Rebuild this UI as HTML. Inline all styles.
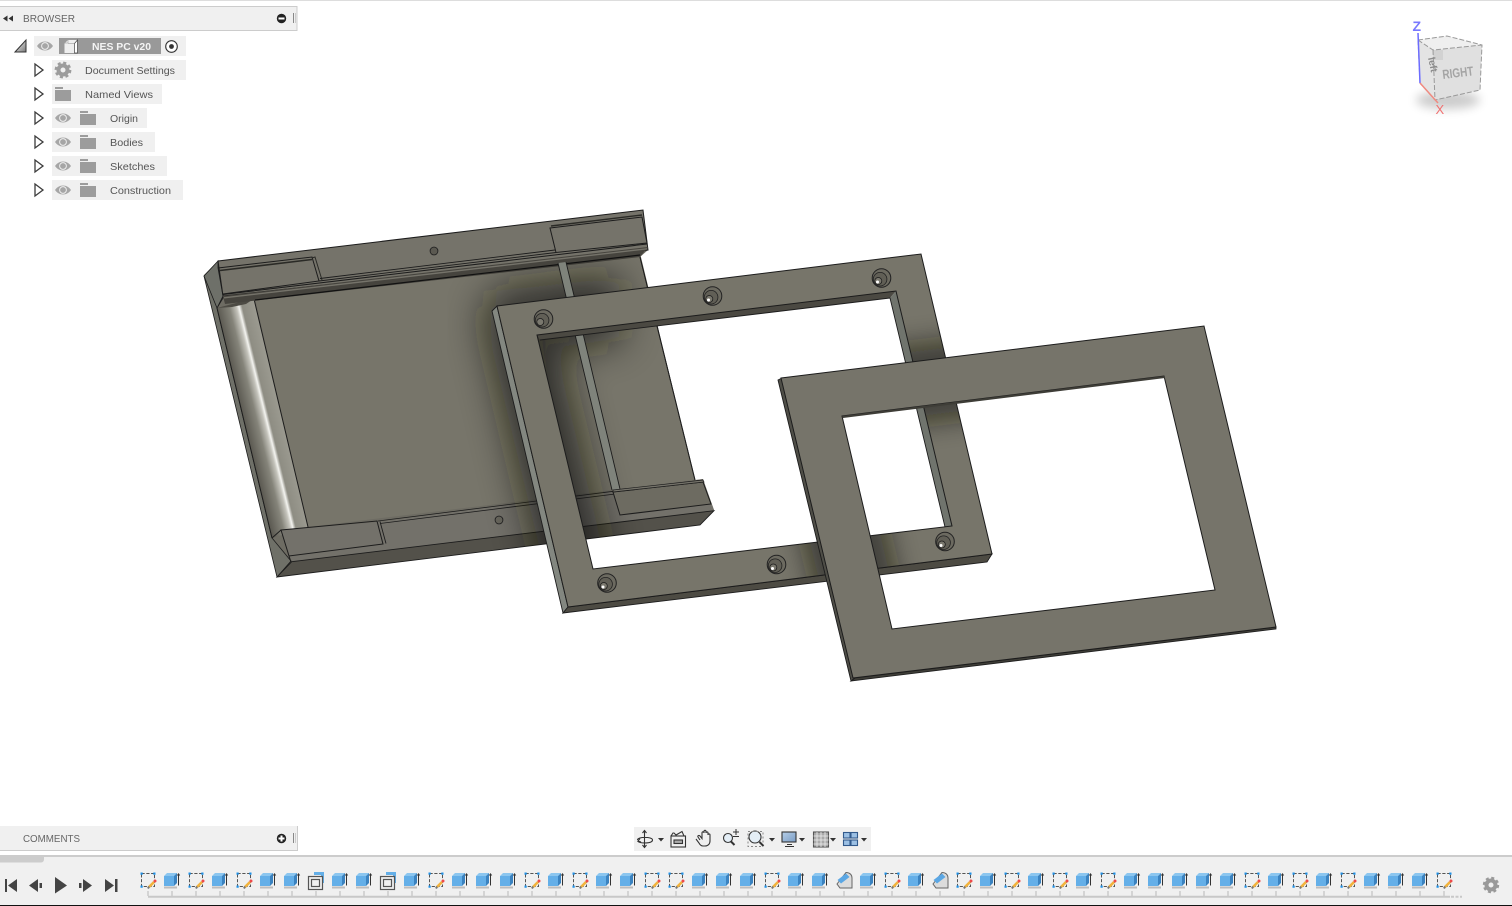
<!DOCTYPE html>
<html><head><meta charset="utf-8"><title>NES PC v20</title>
<style>
html,body{margin:0;padding:0;background:#fff;width:1512px;height:906px;overflow:hidden}
svg{display:block;position:absolute;left:0;top:0}
text{font-family:"Liberation Sans",sans-serif}
.t{font-size:10.5px;fill:#555}
.h{font-size:10.5px;fill:#666}
</style></head><body>
<svg width="1512" height="906" viewBox="0 0 1512 906" xmlns="http://www.w3.org/2000/svg">
<defs>
<filter id="b22" x="-40%" y="-40%" width="180%" height="180%"><feGaussianBlur stdDeviation="20"/></filter>
<filter id="b16" x="-30%" y="-30%" width="160%" height="160%"><feGaussianBlur stdDeviation="15"/></filter>
<filter id="b3" x="-30%" y="-80%" width="160%" height="260%"><feGaussianBlur stdDeviation="5"/></filter>
<linearGradient id="fil" gradientUnits="userSpaceOnUse" x1="217" y1="308" x2="254" y2="299">
<stop offset="0" stop-color="#5c5a52"/><stop offset=".32" stop-color="#85847a"/><stop offset=".5" stop-color="#c4c3bb"/><stop offset=".57" stop-color="#f4f4f0"/><stop offset=".65" stop-color="#8e8d83"/><stop offset="1" stop-color="#9c9b91"/>
</linearGradient>
<linearGradient id="root" x1="0" y1="0" x2="1" y2="1"><stop offset="0" stop-color="#fff"/><stop offset="1" stop-color="#777"/></linearGradient>
<linearGradient id="mon" x1="0" y1="0" x2="1" y2="1"><stop offset="0" stop-color="#b6cfe8"/><stop offset="1" stop-color="#7a9cc4"/></linearGradient>
<clipPath id="trayclip"><polygon points="255,300 640,255 695,480 703,479 714,510 700,525 277,577 272,538 308,527"/></clipPath>
<clipPath id="f2clip"><path clip-rule="evenodd" d="M497,306 921,254 992,554 568,607Z M537,335 896,291 952,526 593,569Z"/></clipPath>

<g id="eye"><path d="M-8,0C-4,-6 4,-6 8,0C4,6 -4,6 -8,0Z" fill="#a6a6a6"/><circle r="3.4" fill="none" stroke="#eee" stroke-width="1"/><circle r="2" fill="#a6a6a6"/></g>
<path id="fold" d="M0,0h8v2h-8zM0,3h16v11h-16z" fill="#9c9c9c"/>
<path id="arr" d="M0,0L8,6L0,12Z" fill="#fff" stroke="#3c3c3c" stroke-width="1.3"/>
<g id="scr"><circle r="9.3" fill="#6c6a60" stroke="#222" stroke-width="1"/><circle cx="-1.4" cy="1.200" r="6.800" fill="#615f56" stroke="#222" stroke-width=".8"/><circle cx="-3.200" cy="3" r="3.500" fill="#7a786e" stroke="#1c1c1c" stroke-width=".8"/></g>
<circle id="wd" r="1.5" fill="#fff"/>

<g id="S"><rect x="-6.5" y="873.5" width="13" height="13" fill="none" stroke="#555" stroke-width="1" stroke-dasharray="3.2 1.6"/><path fill="#1e90e6" d="M-7.500,872.500h2.200v2.200h-2.200zM5.300,872.500h2.200v2.200h-2.200zM-7.500,885.500h2.200v2.200h-2.200z"/><path d="M1,887L6,882" stroke="#f2b33d" stroke-width="2.600"/><path d="M0,888.5L1,886.500" stroke="#777" stroke-width="2"/><circle cx="7" cy="881" r="1.500" fill="#ee4a4a"/></g>
<g id="E"><path d="M-8,876h10v10h-10z" fill="#64afe8"/><path d="M-8,876l3,-3h10l-3,3z" fill="#8cc6ef"/><path d="M2,876l3,-3v10l-3,3z" fill="#3b83c0"/><path d="M-8,886.500h13v2h-13z" fill="#bdbdbd"/><path d="M6.500,885.500v-11" stroke="#333" stroke-width="1"/><path d="M4.800,875.500l1.700,-2.500l1.700,2.500z" fill="#333"/></g>
<g id="C"><path d="M-2,872h10v11h-3v-8h-7z" fill="#64afe8"/><rect x="-7.500" y="876.500" width="14" height="13" fill="#f0f0f0" stroke="#555" stroke-width="1.200"/><rect x="-4.500" y="879.500" width="8" height="7" fill="#f0f0f0" stroke="#555" stroke-width="1.200"/></g>
<g id="F"><path d="M-7,884L2,872.500C6,872.500 8,875 8,878V888H-4Z" fill="#dcdcdc" stroke="#666" stroke-width="1"/><path d="M-6.500,880L2,873.500L5.500,877L-3,883.500Z" fill="#5ba7e4"/></g>
<path id="car" d="M0,0h6l-3,3.500z" fill="#333"/>
</defs>

<rect width="1512" height="906" fill="#fff"/>
<rect width="1512" height="1" fill="#ddd"/>

<!-- TRAY -->
<polygon points="204,275 218,261 643,210 648,250 640,257 695,480 703,479 714,510 700,525 277,577" fill="#6e6c63"/>
<polygon points="255,298 640,253 695,480 308,527" fill="#77756a"/>
<polygon points="204,276 218,267 223,298 217,308 272,538 291,561 277,577" fill="#6f7068" stroke="#1c1c1c" stroke-width=".8"/>
<polygon points="204,276 218,261 218,268 223,296 217,308" fill="#6e7069" stroke="#1c1c1c" stroke-width=".8"/>
<polygon points="217,308 254,299 308,527 272,538" fill="url(#fil)"/>
<polygon points="217,308 255,298 246,304 232,307" fill="#4d4b44"/>
<path d="M217,308 272,538M254,299 308,527" stroke="#1c1c1c" stroke-width="1" fill="none"/>
<polygon points="218,261 643,210 648,250 223,296" fill="#75736a" stroke="#1c1c1c" stroke-width="1"/>
<polygon points="223,296 648,247 640,257 225,304" fill="#46443e"/>
<path d="M224,297.800L647,248.800" stroke="#75736a" stroke-width="1.400"/>
<path d="M223,294.500L647,244" stroke="#1c1c1c" stroke-width="1"/>
<path d="M255,300L640,255" stroke="#111" stroke-width="1.200"/>
<path d="M218,268 312,257 319,281 223,294" fill="none" stroke="#1c1c1c" stroke-width="1"/>
<path d="M220,270.500 312,259.500" stroke="#2a2a26" stroke-width="1.500"/>
<path d="M312,258 315,257 322,280" stroke="#2a2a26" stroke-width="1" fill="none"/>
<path d="M319,281 556,252.500M320,278.500 555,250" stroke="#1c1c1c" stroke-width=".9"/>
<path d="M550,228 642,217 647,243 556,252.500 550,228Z" fill="none" stroke="#1c1c1c" stroke-width="1"/>
<path d="M551,226 642,215" stroke="#2a2a26" stroke-width="1.400"/>
<circle cx="434" cy="251" r="3.900" fill="#5b5951" stroke="#222" stroke-width=".9"/>
<path d="M640,257 695,480" stroke="#1c1c1c" stroke-width="1"/>
<polygon points="281,530 378,522 537,501 703,480 714,510 292,562" fill="#73716a"/>
<polygon points="291.700,561.700 714,510.700 700,525 277,577" fill="#53514a" stroke="#1c1c1c" stroke-width=".9"/>
<path d="M281,530 377,521 383,544 289,556 281,530Z" fill="none" stroke="#1c1c1c" stroke-width="1"/>
<path d="M272,538 281,530M289,556 291,562M380,521.500 386,543.500" stroke="#1c1c1c" stroke-width=".9" fill="none"/>
<path d="M378,521 703,480M380,523.500 703,483" stroke="#1c1c1c" stroke-width=".8"/>
<circle cx="499" cy="520" r="3.900" fill="#67655c" stroke="#222" stroke-width=".9"/>

<!-- shadow of frame 2 on tray -->
<g clip-path="url(#trayclip)"><path d="M497,306 620,291 M497,306 568,607 M537,335 593,569 M537,335 620,325" fill="none" stroke="#14130f" stroke-width="30" opacity=".78" filter="url(#b22)"/></g>
<path d="M640,257 695,480" stroke="#1c1c1c" stroke-width="1" opacity=".7"/>
<!-- stripe -->
<polygon points="558,263 566,262 620,489 612,490" fill="#7f837b"/>
<path d="M566,262 620,489M558,263 612,490" stroke="#1c1c1c" stroke-width=".9"/>
<!-- right end slot -->
<polygon points="613,492 703,482 711,504 620,515" fill="#6d6b61" stroke="#1c1c1c" stroke-width="1"/>
<polygon points="613,490 703,480 704,482 613,492" fill="#75736a" stroke="#1c1c1c" stroke-width=".7"/>

<!-- FRAME 2 -->
<polygon points="492,311 497,306 568,607 563,613" fill="#838780" stroke="#1c1c1c" stroke-width=".9"/>
<polygon points="568,607 992,554 987,562 563,613" fill="#4d4b43" stroke="#1c1c1c" stroke-width=".9"/>
<path fill-rule="evenodd" d="M497,306 921,254 992,554 568,607Z M537,335 896,291 952,526 593,569Z" fill="#77756a"/>
<polygon points="537,335 896,291 890,298 540,340" fill="#4b4942"/>
<polygon points="896,291 952,526 945,527 890,298" fill="#70746d"/>
<g clip-path="url(#f2clip)"><path d="M781,378 1204,326 M781,378 853,678 M842,416 1164,376 M842,416 892,629 M853,678 1000,660" fill="none" stroke="#14130f" stroke-width="24" opacity=".82" filter="url(#b16)"/></g>
<path d="M497,306 921,254 992,554 568,607Z M537,335 896,291 952,526 593,569 537,335Z" fill="none" stroke="#1c1c1c" stroke-width="1"/>
<path d="M540,340 890,298 945,527" fill="none" stroke="#1c1c1c" stroke-width=".9"/>
<use href="#scr" x="543.500" y="319"/>
<use href="#scr" x="712.500" y="296"/><use href="#wd" x="708.500" y="300"/>
<use href="#scr" x="881.500" y="278"/><use href="#wd" x="877.500" y="282"/>
<use href="#scr" x="607" y="583"/><use href="#wd" x="603" y="587"/>
<use href="#scr" x="776.500" y="564.500"/><use href="#wd" x="772.500" y="568.500"/>
<use href="#scr" x="945" y="541.500"/><use href="#wd" x="941" y="545.500"/>

<!-- FRAME 3 -->
<polygon points="778,380 782,378 855,678 851,681" fill="#4f4e47" stroke="#1c1c1c" stroke-width=".9"/>
<polygon points="855,678 1276,627 1276,629 851,681" fill="#3e3d37" stroke="#1c1c1c" stroke-width=".8"/>
<path fill-rule="evenodd" d="M781,378 1204,326 1276,627 853,678Z M842,416 1164,376 1215,590 892,629Z" fill="#76746a"/>
<path d="M781,378 1204,326 1276,627 853,678Z M842,416 1164,376 1215,590 892,629 842,416Z" fill="none" stroke="#1c1c1c" stroke-width="1"/>
<polygon points="842,416 1164,376 1165,378 843,418" fill="#3e3d37"/>

<!-- VIEW CUBE -->
<ellipse cx="1448" cy="100" rx="32" ry="9" fill="#000" opacity=".2" filter="url(#b3)"/>
<polygon points="1418,40 1433,50 1435,100 1420,83" fill="#e4e4e4"/>
<polygon points="1433,50 1482,45 1480,90 1435,100" fill="#e0e0e0"/>
<polygon points="1418,40 1447,36 1482,45 1433,50" fill="#efefef"/>
<rect x="1433" y="50" width="10" height="10" fill="#d2d2d2"/>
<path d="M1418,40 1447,36 1482,45 1480,90 1435,100 1420,83ZM1418,40 1433,50 1482,45M1433,50 1435,100" fill="none" stroke="#999" stroke-width="1" stroke-dasharray="5 2"/>
<text transform="translate(1443,79) rotate(-7)" style="font-size:13px;font-weight:bold;fill:#a4a4a4" textLength="31" lengthAdjust="spacingAndGlyphs">RIGHT</text>
<text transform="translate(1428,58) rotate(78)" style="font-size:10px;font-weight:bold;fill:#8c8c8c">left</text>
<path d="M1418,33 1420,83" stroke="#6c6cff" stroke-width="1.500"/>
<path d="M1420,83 1438,103" stroke="#f08a80" stroke-width="1.500"/>
<text x="1412.500" y="31" style="font-size:14px;font-weight:bold;fill:#7878ff">Z</text>
<text x="1435.500" y="114" style="font-size:13px;fill:#f07070">X</text>

<!-- BROWSER -->
<rect x="-1" y="6.500" width="298" height="24" fill="#f0f0f0" stroke="#ccc"/>
<path d="M3,18.500l4.500,-3v6zM8.500,18.500l4.500,-3v6z" fill="#333"/>
<text x="23" y="22" class="h" textLength="52" lengthAdjust="spacingAndGlyphs">BROWSER</text>
<circle cx="281.500" cy="18.500" r="4.700" fill="#222"/><rect x="278.500" y="17.500" width="6" height="2" fill="#fff"/>
<rect x="293" y="13" width="1" height="10" fill="#888"/><rect x="295" y="13" width="1" height="10" fill="#ccc"/>

<path d="M15,52L26,40V52Z" fill="url(#root)" stroke="#333" stroke-width="1"/>
<rect x="34" y="36" width="152" height="20" fill="#f0f0f0"/>
<use href="#eye" x="45" y="46"/>
<rect x="59" y="38" width="102" height="16" fill="#999"/>
<path d="M64.500,43.500l3.500,-3.500h9.500v13h-13z" fill="#eee"/><path d="M68,40v3h-3.500M68,43.500h6" stroke="#aaa" stroke-width=".7" fill="none"/><path d="M74.500,43.500l3,-3.500v13h-3z" fill="#fff" stroke="#444" stroke-width=".7"/>
<text x="92" y="50" style="font-size:10.500px;font-weight:bold;fill:#f4f4f4" textLength="59" lengthAdjust="spacingAndGlyphs">NES PC v20</text>
<circle cx="171.500" cy="46.500" r="5.800" fill="#fff" stroke="#333" stroke-width="1.100"/><circle cx="171.500" cy="46.500" r="2.400" fill="#333"/>

<rect x="52" y="60" width="134" height="20" fill="#f0f0f0"/>
<rect x="52" y="84" width="110" height="20" fill="#f0f0f0"/>
<rect x="52" y="108" width="95" height="20" fill="#f0f0f0"/>
<rect x="52" y="132" width="103" height="20" fill="#f0f0f0"/>
<rect x="52" y="156" width="115" height="20" fill="#f0f0f0"/>
<rect x="52" y="180" width="131" height="20" fill="#f0f0f0"/>

<use href="#arr" x="35" y="64"/><use href="#arr" x="35" y="88"/><use href="#arr" x="35" y="112"/><use href="#arr" x="35" y="136"/><use href="#arr" x="35" y="160"/><use href="#arr" x="35" y="184"/>

<circle cx="63" cy="70" r="4.500" fill="none" stroke="#9c9c9c" stroke-width="4"/>
<circle cx="63" cy="70" r="7.300" fill="none" stroke="#9c9c9c" stroke-width="2.200" stroke-dasharray="3.100 2.630"/>
<use href="#fold" x="55" y="87"/>
<use href="#eye" x="63" y="118"/><use href="#fold" x="80" y="111"/>
<use href="#eye" x="63" y="142"/><use href="#fold" x="80" y="135"/>
<use href="#eye" x="63" y="166"/><use href="#fold" x="80" y="159"/>
<use href="#eye" x="63" y="190"/><use href="#fold" x="80" y="183"/>

<text x="85" y="74" class="t" textLength="90" lengthAdjust="spacingAndGlyphs">Document Settings</text>
<text x="85" y="98" class="t" textLength="68" lengthAdjust="spacingAndGlyphs">Named Views</text>
<text x="110" y="122" class="t" textLength="28" lengthAdjust="spacingAndGlyphs">Origin</text>
<text x="110" y="146" class="t" textLength="33" lengthAdjust="spacingAndGlyphs">Bodies</text>
<text x="110" y="170" class="t" textLength="45" lengthAdjust="spacingAndGlyphs">Sketches</text>
<text x="110" y="194" class="t" textLength="61" lengthAdjust="spacingAndGlyphs">Construction</text>

<!-- COMMENTS -->
<rect x="-1" y="826" width="298" height="24" fill="#f0f0f0"/><path d="M-1,850.500H297.500V826" fill="none" stroke="#ccc"/>
<text x="23" y="842" class="h" textLength="57" lengthAdjust="spacingAndGlyphs">COMMENTS</text>
<circle cx="281.500" cy="838.500" r="4.700" fill="#222"/><path d="M278.500,837.500h2v-2h2v2h2v2h-2v2h-2v-2h-2z" fill="#fff"/>
<rect x="293" y="833" width="1" height="10" fill="#888"/><rect x="295" y="833" width="1" height="10" fill="#ccc"/>

<!-- NAV BAR -->
<rect x="634" y="827" width="237" height="24" fill="#f0f0f0"/>
<g fill="none" stroke="#333" stroke-width="1.100">
<path d="M644.500,831V847M637.500,840C637.500,836.500 652.500,836.500 652.500,840C652.500,843.500 640.500,844 637.500,841"/>
<path d="M642.500,833l2,-2.500l2,2.500M642.500,845l2,2.500l2,-2.500M641,842l-3,-1l2,-2.500"/>
<rect x="671" y="836" width="14.500" height="11"/><rect x="674" y="840" width="8.500" height="3.500" fill="#aaa"/>
<path d="M671,836l2,-3h1l2,2l6,-3.500l2,4.500"/>
<path d="M700,840l-2,-3c-.8,-1.200 1,-2.200 2,-1l2,2.500V833c0,-1.600 2,-1.600 2,0V831.500c0,-1.600 2,-1.600 2,0V833c0,-1.400 2,-1.400 2,0v2c0,-1.400 2,-1.400 2,0v6c0,3 -2,5 -5,5h-2c-2,0 -3,-1 -4,-3l-3,-4"/>
<circle cx="728" cy="838" r="4.500" fill="#e4eef6"/>
<circle cx="755" cy="837" r="6" fill="#e4eef6"/>
<rect x="748" y="831.500" width="15" height="15" stroke="#888" stroke-width="1" stroke-dasharray="2 2"/>
<rect x="782" y="832" width="14" height="10" fill="url(#mon)"/>
<path d="M787,844.500h5M785,846.500h9"/>
<rect x="813.500" y="832" width="15" height="15" fill="#aaa" stroke="#555"/>
<path d="M817,832v15M821,832v15M825,832v15M813.500,836h15M813.500,840h15M813.500,844h15" stroke="#eee" stroke-width=".8"/>
<rect x="843.500" y="832.500" width="6.500" height="5.500" fill="#9cc0e4" stroke="#335a8c"/><rect x="851" y="832.500" width="6.500" height="5.500" fill="#9cc0e4" stroke="#335a8c"/>
<rect x="843.500" y="840" width="6.500" height="5.500" fill="#9cc0e4" stroke="#335a8c"/><rect x="851" y="840" width="6.500" height="5.500" fill="#9cc0e4" stroke="#335a8c"/>
</g>
<path d="M731,841.500l3.500,3.500M759.500,842l4,4" stroke="#333" stroke-width="2"/>
<path d="M733,832h6M736,829v6M733,836.500h6" stroke="#333" stroke-width="1" fill="none"/>
<use href="#car" x="658" y="838"/><use href="#car" x="769" y="838"/><use href="#car" x="799" y="838"/><use href="#car" x="830" y="838"/><use href="#car" x="861" y="838"/>

<!-- TIMELINE -->
<rect x="0" y="855" width="1512" height="50" fill="#f0f0f0"/>
<rect x="0" y="855" width="1512" height="2" fill="#ccc"/>
<path d="M0,857H44V859C44,861 43,862.500 41,862.500H0Z" fill="#ccc"/>
<rect x="0" y="905" width="1512" height="1" fill="#111"/>
<g fill="#444">
<path d="M5,879h2v13h-2zM17,879v13l-9,-6.500z"/>
<path d="M38,879v13l-9,-6.500zM39.500,883h2.500v5h-2.500z"/>
<path d="M55,877l12,8.500l-12,8z"/>
<path d="M83,879v13l9,-6.500zM79,883h2.500v5h-2.500z"/>
<path d="M105,879l9,6.500l-9,6.500zM115,879h2.500v13h-2.500z"/>
</g>
<path d="M148,896.800H1450" stroke="#c8c8c8" stroke-width="2"/>
<path d="M1451,896.800H1462" stroke="#c8c8c8" stroke-width="2" stroke-dasharray="3 1.500"/>
<path stroke="#c8c8c8" stroke-width="1.400" d="M148,891v5M172,891v5M196,891v5M220,891v5M244,891v5M268,891v5M292,891v5M316,891v5M340,891v5M364,891v5M388,891v5M412,891v5M436,891v5M460,891v5M484,891v5M508,891v5M532,891v5M556,891v5M580,891v5M604,891v5M628,891v5M652,891v5M676,891v5M700,891v5M724,891v5M748,891v5M772,891v5M796,891v5M820,891v5M844,891v5M868,891v5M892,891v5M916,891v5M940,891v5M964,891v5M988,891v5M1012,891v5M1036,891v5M1060,891v5M1084,891v5M1108,891v5M1132,891v5M1156,891v5M1180,891v5M1204,891v5M1228,891v5M1252,891v5M1276,891v5M1300,891v5M1324,891v5M1348,891v5M1372,891v5M1396,891v5M1420,891v5M1444,891v5"/>
<use href="#S" x="148"/><use href="#E" x="172"/><use href="#S" x="196"/><use href="#E" x="220"/><use href="#S" x="244"/><use href="#E" x="268"/><use href="#E" x="292"/><use href="#C" x="316"/><use href="#E" x="340"/><use href="#E" x="364"/><use href="#C" x="388"/><use href="#E" x="412"/><use href="#S" x="436"/><use href="#E" x="460"/><use href="#E" x="484"/><use href="#E" x="508"/><use href="#S" x="532"/><use href="#E" x="556"/><use href="#S" x="580"/><use href="#E" x="604"/><use href="#E" x="628"/><use href="#S" x="652"/><use href="#S" x="676"/><use href="#E" x="700"/><use href="#E" x="724"/><use href="#E" x="748"/><use href="#S" x="772"/><use href="#E" x="796"/><use href="#E" x="820"/><use href="#F" x="844"/><use href="#E" x="868"/><use href="#S" x="892"/><use href="#E" x="916"/><use href="#F" x="940"/><use href="#S" x="964"/><use href="#E" x="988"/><use href="#S" x="1012"/><use href="#E" x="1036"/><use href="#S" x="1060"/><use href="#E" x="1084"/><use href="#S" x="1108"/><use href="#E" x="1132"/><use href="#E" x="1156"/><use href="#E" x="1180"/><use href="#E" x="1204"/><use href="#E" x="1228"/><use href="#S" x="1252"/><use href="#E" x="1276"/><use href="#S" x="1300"/><use href="#E" x="1324"/><use href="#S" x="1348"/><use href="#E" x="1372"/><use href="#E" x="1396"/><use href="#E" x="1420"/><use href="#S" x="1444"/>
<circle cx="1491" cy="885" r="4.500" fill="none" stroke="#999" stroke-width="4"/>
<circle cx="1491" cy="885" r="7.100" fill="none" stroke="#999" stroke-width="2.200" stroke-dasharray="3 2.580"/>
</svg>
</body></html>
